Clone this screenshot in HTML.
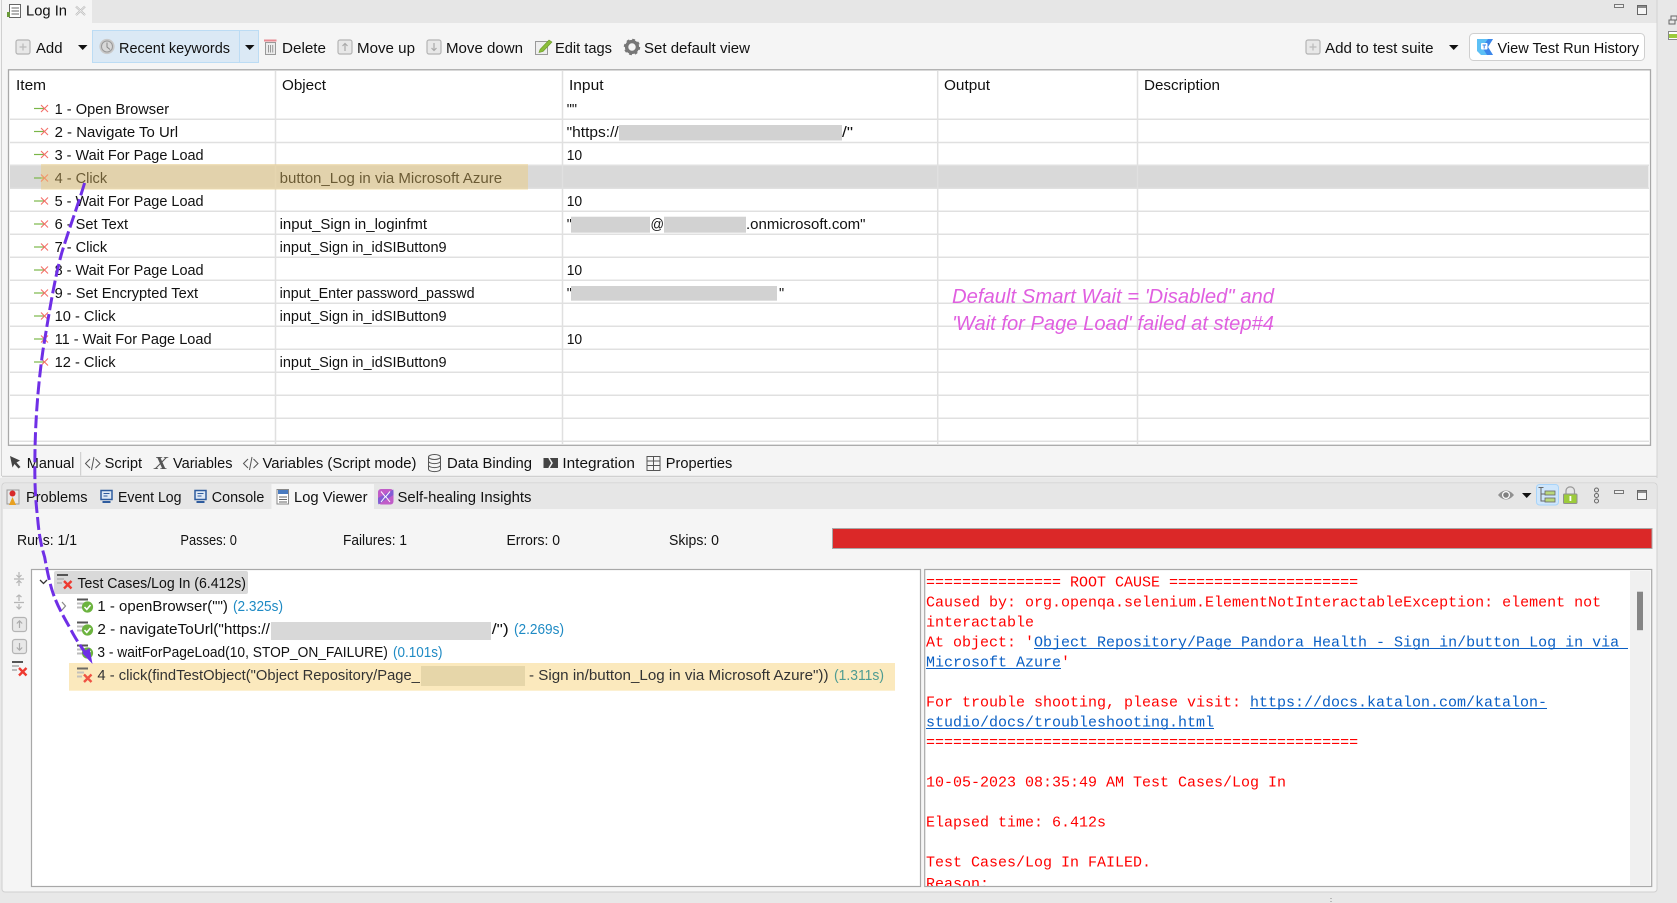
<!DOCTYPE html>
<html><head><meta charset="utf-8"><title>Log In</title>
<style>
html,body{margin:0;padding:0;background:#e8e8e8;overflow:hidden}
svg{display:block}
text{font-family:"Liberation Sans",sans-serif;font-size:14.5px;fill:#111}
.m{font-family:"Liberation Mono",monospace;font-size:15px;fill:#f00}
.l{font-family:"Liberation Mono",monospace;font-size:15px;fill:#0a5fc4}
.t{fill:#1e8ac4}
.p{font-style:italic;font-size:20px;fill:#e05fe0}
.g{stroke:#e0e0e0;stroke-width:1.5;fill:none}
.ib{fill:#e8e8e8;stroke:#b4b4b4;stroke-width:1.2}
.ia{stroke:#aaa;stroke-width:1.2;fill:none}
</style></head><body>
<svg xmlns="http://www.w3.org/2000/svg" width="1677" height="903" viewBox="0 0 1677 903">
<defs>
<clipPath id="cons"><rect x="925" y="570" width="705" height="316"/></clipPath>
<g id="rx"><path d="M34 0H44" stroke="#7ab648" stroke-width="1.2"/><path d="M41 -3.5L48 3.5M48 -3.5L41 3.5" stroke="#f4706a" stroke-width="1.1"/></g>
<g id="bars"><path d="M0 0H11" stroke="#555" stroke-width="2"/><path d="M0 4H7M0 8H5" stroke="#bbb" stroke-width="2"/></g>
<g id="ok"><use href="#bars"/><circle cx="10.500" cy="7.500" r="5.600" fill="#6cb33f"/><path d="M7.500 7.500l2.300 2.400L13.500 5.500" stroke="#fff" stroke-width="1.600" fill="none"/></g>
<g id="bad"><use href="#bars"/><path d="M7 6L14.500 13.500M14.500 6L7 13.500" stroke="#ee3a30" stroke-width="2.400"/></g>
<g id="mon"><rect x="0.500" y="0.500" width="11" height="9" fill="#dfe9f5" stroke="#2f5c9e" stroke-width="1.500"/><path d="M3 3.500H9M3 6H7" stroke="#2f5c9e"/><path d="M2 12H10" stroke="#2f5c9e" stroke-width="2"/></g>
</defs>

<rect width="1677" height="903" fill="#e8e8e8"/>
<rect x="0" y="0" width="1657" height="23" fill="#e6e6e6"/>
<rect x="0" y="23" width="1657" height="455" fill="#f5f5f5"/>
<rect x="0" y="0" width="92" height="23" fill="#f5f5f5"/>
<path d="M1.500 0V476" stroke="#d0d0d0" stroke-width="1"/>
<path d="M1657 0V478" stroke="#d2d2d2" stroke-width="1"/>
<path d="M2 476.500H1657" stroke="#d0d0d0" stroke-width="1.500"/>

<rect x="9.500" y="4.500" width="11" height="13" fill="#fff" stroke="#666"/><path d="M11.500 8H19M11.500 11H19M11.500 14H19" stroke="#666"/><rect x="7" y="12" width="3" height="5" fill="#6a9a3a"/>
<text x="26" y="15.500" textLength="41" lengthAdjust="spacingAndGlyphs">Log In</text>
<path d="M76 6.500L85 15M85 6.500L76 15" stroke="#b5b5b5" stroke-width="2" fill="none"/><path d="M76 6.500L85 15M85 6.500L76 15" stroke="#f2f2f2" stroke-width=".8" fill="none"/>
<rect x="1614.500" y="4.500" width="9" height="3" fill="#eee" stroke="#777"/>
<rect x="1637.500" y="5.500" width="9" height="9" fill="#f5f5f5" stroke="#666"/><path d="M1637.500 7H1646.500" stroke="#666" stroke-width="1.500"/>
<rect x="1671" y="16" width="6" height="4" fill="none" stroke="#666"/><rect x="1669" y="20" width="6" height="4" fill="none" stroke="#666"/>
<rect x="1668.500" y="31.500" width="9" height="8" fill="#fff" stroke="#888"/><rect x="1669" y="34" width="8" height="4" fill="#9ccb3b"/>

<rect class="ib" x="16" y="40" width="14" height="14" rx="2"/><path d="M23 43.500V50.500M19.500 47H26.500" stroke="#bbb" stroke-width="1.200"/>
<text x="36" y="53" textLength="26.500" lengthAdjust="spacingAndGlyphs">Add</text>
<path d="M78 45H87.500L82.700 50Z" fill="#111"/>
<rect x="92.500" y="30.500" width="147" height="32" fill="#dbe9f5" stroke="#bcdcf4"/>
<rect x="239.500" y="30.500" width="19" height="32" fill="#dbe9f5" stroke="#bcdcf4"/>
<circle cx="107" cy="46.500" r="7.600" fill="#c9c9c9"/><circle cx="107" cy="46.500" r="5.500" fill="#d8d8d8" stroke="#999"/><path d="M107 42.500V47L110 49.500" stroke="#888" fill="none"/>
<text x="119" y="53" textLength="111" lengthAdjust="spacingAndGlyphs">Recent keywords</text>
<path d="M245 45H254.500L249.700 50Z" fill="#111"/>
<path d="M265.500 42.500H275.500V54.500H265.500Z M268.500 45V52.500M270.500 45V52.500M272.700 45V52.500" fill="#ececec" stroke="#999"/><rect x="264" y="39.500" width="12.500" height="2" fill="#e88a92"/>
<text x="282" y="53" textLength="44" lengthAdjust="spacingAndGlyphs">Delete</text>
<rect class="ib" x="338" y="40" width="14" height="14" rx="2"/><path d="M345 51V43.500M342.500 46L345 43.500L347.500 46" class="ia"/>
<text x="357" y="53" textLength="58" lengthAdjust="spacingAndGlyphs">Move up</text>
<rect class="ib" x="427" y="40" width="14" height="14" rx="2"/><path d="M434 43V50.500M431.500 48L434 50.500L436.500 48" class="ia"/>
<text x="446" y="53" textLength="77" lengthAdjust="spacingAndGlyphs">Move down</text>
<rect x="535.500" y="41.500" width="12" height="13" fill="#eee" stroke="#999"/><path d="M540 49.500L549 40L552 42L543 51.500L539 52.500Z" fill="#8bbd3a" stroke="#6a9a2a" stroke-width=".6"/>
<text x="555" y="53" textLength="57" lengthAdjust="spacingAndGlyphs">Edit tags</text>
<circle cx="632" cy="47" r="5.400" fill="none" stroke="#777" stroke-width="3.400"/><circle cx="632" cy="47" r="7.200" fill="none" stroke="#777" stroke-width="2" stroke-dasharray="2.800 2.850"/>
<text x="644" y="53" textLength="106" lengthAdjust="spacingAndGlyphs">Set default view</text>
<rect class="ib" x="1306" y="40" width="14" height="14" rx="2"/><path d="M1313 43.500V50.500M1309.500 47H1316.500" stroke="#bbb" stroke-width="1.200"/>
<text x="1325" y="53" textLength="108.500" lengthAdjust="spacingAndGlyphs">Add to test suite</text>
<path d="M1449 45H1458.500L1453.700 50Z" fill="#111"/>
<rect x="1469.500" y="33.500" width="175" height="27" rx="4" fill="#fff" stroke="#cfcfcf"/>
<path d="M1477 39H1493L1488 47L1493 55H1481L1477 51Z" fill="#5dc0f5"/><path d="M1488 39H1493L1488 47L1493 55H1487L1482 47Z" fill="#3d86ea"/><rect x="1481" y="43" width="6.500" height="6.500" rx="1" fill="#fff"/><path d="M1482.500 45H1486M1484.200 45V48.500" stroke="#3d86ea"/>
<text x="1497.500" y="53" textLength="141.500" lengthAdjust="spacingAndGlyphs">View Test Run History</text>

<rect x="8.500" y="69.800" width="1642" height="375.500" fill="#fff" stroke="#a8a8a8" stroke-width="1.300"/>
<rect x="10" y="165" width="1638.500" height="23.500" fill="#d9d9d9"/>
<g class="g">
<path d="M10 119.300H1649M10 142.500H1649M10 165.300H1649M10 188.300H1649M10 211.300H1649M10 234.300H1649M10 257.300H1649M10 280.300H1649M10 303.300H1649M10 326.300H1649M10 349.300H1649M10 372.300H1649M10 395.300H1649M10 418.300H1649M10 441.300H1649"/>
<path d="M275.500 71V444M562.500 71V444M937.700 71V444M1137.500 71V444"/>
</g>

<text x="16" y="90" textLength="30" lengthAdjust="spacingAndGlyphs">Item</text>
<text x="282" y="90" textLength="44" lengthAdjust="spacingAndGlyphs">Object</text>
<text x="569" y="90" textLength="34.500" lengthAdjust="spacingAndGlyphs">Input</text>
<text x="944" y="90" textLength="46" lengthAdjust="spacingAndGlyphs">Output</text>
<text x="1144" y="90" textLength="76" lengthAdjust="spacingAndGlyphs">Description</text>

<use href="#rx" y="108.500"/><use href="#rx" y="131.500"/><use href="#rx" y="154.500"/><use href="#rx" y="178"/><use href="#rx" y="201"/><use href="#rx" y="224"/><use href="#rx" y="247"/><use href="#rx" y="270"/><use href="#rx" y="293"/><use href="#rx" y="316"/><use href="#rx" y="339"/><use href="#rx" y="362"/>

<text x="54.600" y="114" textLength="114.500" lengthAdjust="spacingAndGlyphs">1 - Open Browser</text>
<text x="54.600" y="137" textLength="123.500" lengthAdjust="spacingAndGlyphs">2 - Navigate To Url</text>
<text x="54.600" y="160" textLength="149" lengthAdjust="spacingAndGlyphs">3 - Wait For Page Load</text>
<text x="54.600" y="183" textLength="52.500" lengthAdjust="spacingAndGlyphs">4 - Click</text>
<text x="54.600" y="206" textLength="149" lengthAdjust="spacingAndGlyphs">5 - Wait For Page Load</text>
<text x="54.600" y="229" textLength="73.500" lengthAdjust="spacingAndGlyphs">6 - Set Text</text>
<text x="54.600" y="252" textLength="52.500" lengthAdjust="spacingAndGlyphs">7 - Click</text>
<text x="54.600" y="275" textLength="149" lengthAdjust="spacingAndGlyphs">8 - Wait For Page Load</text>
<text x="54.600" y="298" textLength="143.500" lengthAdjust="spacingAndGlyphs">9 - Set Encrypted Text</text>
<text x="54.600" y="321" textLength="61" lengthAdjust="spacingAndGlyphs">10 - Click</text>
<text x="54.600" y="344" textLength="157" lengthAdjust="spacingAndGlyphs">11 - Wait For Page Load</text>
<text x="54.600" y="367" textLength="61" lengthAdjust="spacingAndGlyphs">12 - Click</text>

<text x="279.600" y="183" textLength="222.500" lengthAdjust="spacingAndGlyphs">button_Log in via Microsoft Azure</text>
<text x="279.600" y="229" textLength="147.500" lengthAdjust="spacingAndGlyphs">input_Sign in_loginfmt</text>
<text x="279.600" y="252" textLength="167" lengthAdjust="spacingAndGlyphs">input_Sign in_idSIButton9</text>
<text x="279.600" y="298" textLength="195" lengthAdjust="spacingAndGlyphs">input_Enter password_passwd</text>
<text x="279.600" y="321" textLength="167" lengthAdjust="spacingAndGlyphs">input_Sign in_idSIButton9</text>
<text x="279.600" y="367" textLength="167" lengthAdjust="spacingAndGlyphs">input_Sign in_idSIButton9</text>

<text x="566.700" y="114">""</text>
<text x="566.700" y="137" textLength="52" lengthAdjust="spacingAndGlyphs">"https://</text>
<rect x="619" y="125" width="223" height="15.500" fill="#d2d2d2"/>
<text x="842" y="137" textLength="11" lengthAdjust="spacingAndGlyphs">/"</text>
<text x="566.700" y="160" textLength="15.500" lengthAdjust="spacingAndGlyphs">10</text>
<text x="566.700" y="206" textLength="15.500" lengthAdjust="spacingAndGlyphs">10</text>
<text x="566.700" y="229">"</text>
<rect x="571" y="216.700" width="79" height="16" fill="#d2d2d2"/>
<text x="650.500" y="229" textLength="13.500" lengthAdjust="spacingAndGlyphs">@</text>
<rect x="664" y="216.700" width="82" height="16" fill="#d2d2d2"/>
<text x="746" y="229" textLength="119.500" lengthAdjust="spacingAndGlyphs">.onmicrosoft.com"</text>
<text x="566.700" y="275" textLength="15.500" lengthAdjust="spacingAndGlyphs">10</text>
<text x="566.700" y="298">"</text>
<rect x="571" y="286" width="206" height="14.700" fill="#d2d2d2"/>
<text x="779" y="298">"</text>
<text x="566.700" y="344" textLength="15.500" lengthAdjust="spacingAndGlyphs">10</text>

<rect x="41" y="164" width="487" height="25.700" fill="#f0c868" opacity=".4"/>

<text class="p" x="952" y="303" textLength="322" lengthAdjust="spacingAndGlyphs">Default Smart Wait = 'Disabled" and</text>
<text class="p" x="952" y="330" textLength="322" lengthAdjust="spacingAndGlyphs">'Wait for Page Load' failed at step#4</text>

<path d="M10 456L20 460.500L16.500 462.500L20.500 467L18.500 468.500L14.500 464L12.500 467.500Z" fill="#444"/>
<text x="26.800" y="468" textLength="47.500" lengthAdjust="spacingAndGlyphs">Manual</text>
<path d="M80.700 452V475.500" stroke="#c8c8c8"/>
<path d="M90 459L85.500 463.500L90 468M95.500 459L100 463.500L95.500 468M94 457L91.500 470" stroke="#555" fill="none"/>
<text x="104.600" y="468" textLength="37.500" lengthAdjust="spacingAndGlyphs">Script</text>
<text x="154" y="469" textLength="14" lengthAdjust="spacingAndGlyphs" style="font-family:'Liberation Serif',serif;font-weight:bold;font-style:italic;font-size:18px;fill:#555">X</text>
<text x="173" y="468" textLength="59.500" lengthAdjust="spacingAndGlyphs">Variables</text>
<path d="M248 459L243.500 463.500L248 468M253.500 459L258 463.500L253.500 468M252 457L249.500 470" stroke="#555" fill="none"/>
<text x="262.500" y="468" textLength="154" lengthAdjust="spacingAndGlyphs">Variables (Script mode)</text>
<ellipse cx="434.500" cy="457" rx="6" ry="2.500" fill="#f5f5f5" stroke="#555"/><path d="M428.500 457V469C428.500 472.500 440.500 472.500 440.500 469V457M428.500 461C428.500 464.500 440.500 464.500 440.500 461M428.500 465C428.500 468.500 440.500 468.500 440.500 465" fill="none" stroke="#555"/>
<text x="447" y="468" textLength="85" lengthAdjust="spacingAndGlyphs">Data Binding</text>
<rect x="543.500" y="458" width="14.500" height="10" fill="#444"/><path d="M549 458L552 463L549 468" stroke="#f5f5f5" stroke-width="1.500" fill="none"/>
<text x="562.400" y="468" textLength="72.500" lengthAdjust="spacingAndGlyphs">Integration</text>
<path d="M647 456.500H660V470.500H647ZM647 461H660M647 465.500H660M653.500 456.500V470.500" stroke="#555" fill="none"/>
<text x="665.800" y="468" textLength="66.500" lengthAdjust="spacingAndGlyphs">Properties</text>

<rect x="2" y="483" width="1655" height="409" rx="3" fill="#f5f5f5" stroke="#d0d0d0"/>
<rect x="3" y="484" width="1653" height="25" fill="#e6e6e6"/>
<rect x="271.500" y="483.500" width="102.500" height="26" fill="#f5f5f5"/>

<rect x="7" y="490" width="12" height="14" fill="#e8e8e8" stroke="#999"/><circle cx="12.500" cy="493.500" r="3" fill="#d82a2a"/><path d="M9 505L12.500 497L16 505Z" fill="#e8a020"/>
<text x="26" y="501.800" textLength="61.500" lengthAdjust="spacingAndGlyphs">Problems</text>
<use href="#mon" x="100.500" y="490"/>
<text x="118" y="501.800" textLength="63.500" lengthAdjust="spacingAndGlyphs">Event Log</text>
<use href="#mon" x="194.500" y="490"/>
<text x="211.800" y="501.800" textLength="52.500" lengthAdjust="spacingAndGlyphs">Console</text>
<rect x="277" y="489.500" width="11.500" height="14.500" fill="#fff" stroke="#888"/><rect x="278" y="490" width="10" height="4" fill="#4a7bc0"/><path d="M279 497H287M279 499.500H287M279 502H287" stroke="#666"/>
<text x="294" y="501.800" textLength="73.500" lengthAdjust="spacingAndGlyphs">Log Viewer</text>
<rect x="378" y="489" width="15.500" height="15.500" rx="3" fill="#c05cc8"/><path d="M378 504.500V498L393.500 489.500V495Z" fill="#6a5cd8" opacity=".7"/><path d="M381 491.500L385.500 497L390 491.500M385 497L381 502M386 497L390 502" stroke="#fff" fill="none"/>
<text x="397.500" y="501.800" textLength="134" lengthAdjust="spacingAndGlyphs">Self-healing Insights</text>

<path d="M1498 495C1503 489 1509 489 1514 495C1509 501 1503 501 1498 495Z" fill="#909090"/><circle cx="1506" cy="495" r="4" fill="#fff"/><circle cx="1506" cy="495" r="2.800" fill="#808080"/>
<path d="M1522 493H1531.500L1526.700 498Z" fill="#111"/>
<rect x="1536.500" y="484.500" width="22" height="20.500" rx="3" fill="#cfe6fb" stroke="#a8d4fa"/>
<path d="M1541 488V501H1545M1541 494H1545M1538.500 487.500H1543.500" stroke="#666" fill="none"/><rect x="1545" y="491" width="10" height="4" fill="#b9d77a" stroke="#666" stroke-width=".8"/><rect x="1545" y="498" width="10" height="4" fill="#b9d77a" stroke="#666" stroke-width=".8"/>
<path d="M1566 494V491C1566 485.500 1574.500 485.500 1574.500 491V494" stroke="#9a9a9a" stroke-width="1.200" fill="none"/><rect x="1563.500" y="494" width="13.500" height="9.500" rx="1" fill="#9ccb3b" stroke="#909090"/><rect x="1569.500" y="496" width="1.800" height="5" fill="#fff"/>
<circle cx="1596.500" cy="490" r="2" fill="none" stroke="#666"/><circle cx="1596.500" cy="495.500" r="2" fill="none" stroke="#666"/><circle cx="1596.500" cy="501" r="2" fill="none" stroke="#666"/>
<rect x="1614.500" y="490.500" width="9" height="3" fill="#eee" stroke="#777"/>
<rect x="1637.500" y="490.500" width="9" height="9" fill="#f5f5f5" stroke="#666"/><path d="M1637.500 492H1646.500" stroke="#666" stroke-width="1.500"/>

<text x="17" y="545" textLength="60" lengthAdjust="spacingAndGlyphs">Runs: 1/1</text>
<text x="180.400" y="545" textLength="56.500" lengthAdjust="spacingAndGlyphs">Passes: 0</text>
<text x="343" y="545" textLength="64" lengthAdjust="spacingAndGlyphs">Failures: 1</text>
<text x="506.500" y="545" textLength="53.500" lengthAdjust="spacingAndGlyphs">Errors: 0</text>
<text x="669" y="545" textLength="50" lengthAdjust="spacingAndGlyphs">Skips: 0</text>
<rect x="832.500" y="528.500" width="819.500" height="20" fill="#db2828" stroke="#a8a8a8"/>

<path d="M19 572V577M16.500 575L19 577.500L21.500 575M19 586V581M16.500 583L19 580.500L21.500 583M14 579H24" stroke="#b5b5b5" fill="none" stroke-width="1.200"/>
<path d="M19 595V601M16.500 597L19 595L21.500 597M19 609V604M16.500 606.500L19 609L21.500 606.500M14 602.500H24" stroke="#b5b5b5" fill="none" stroke-width="1.200"/>
<rect class="ib" x="12.500" y="617.500" width="14" height="14" rx="2.500"/><path d="M19.500 628V621M16.800 623.500L19.500 620.800L22.200 623.500" class="ia"/>
<rect class="ib" x="12.500" y="639.500" width="14" height="14" rx="2.500"/><path d="M19.500 643V650M16.800 647.500L19.500 650.200L22.200 647.500" class="ia"/>
<use href="#bad" x="12" y="662"/>

<rect x="31.500" y="569.500" width="889" height="317" fill="#fff" stroke="#a8a8a8" stroke-width="1.200"/>
<rect x="54" y="571" width="194" height="23" rx="2" fill="#d9d9d9"/>
<path d="M40 580L43.500 583.500L47 580" stroke="#333" stroke-width="1.300" fill="none"/>
<use href="#bad" x="57" y="575"/>
<text x="77.500" y="588" textLength="168.500" lengthAdjust="spacingAndGlyphs">Test Cases/Log In (6.412s)</text>
<path d="M62 602L65.500 606L62 610" stroke="#888" stroke-width="1.200" fill="none"/>
<use href="#ok" x="77" y="599.500"/>
<text x="97.400" y="611" textLength="130.500" lengthAdjust="spacingAndGlyphs">1 - openBrowser("")</text>
<text class="t" x="233" y="611" textLength="50" lengthAdjust="spacingAndGlyphs">(2.325s)</text>
<use href="#ok" x="77" y="622.500"/>
<text x="97.400" y="634" textLength="172.500" lengthAdjust="spacingAndGlyphs">2 - navigateToUrl("https://</text>
<rect x="271" y="622" width="220" height="18" fill="#d8d8d8"/>
<text x="491.800" y="634" textLength="17" lengthAdjust="spacingAndGlyphs">/")</text>
<text class="t" x="514" y="634" textLength="50" lengthAdjust="spacingAndGlyphs">(2.269s)</text>
<use href="#ok" x="77" y="645.500"/>
<text x="97.400" y="657" textLength="290.500" lengthAdjust="spacingAndGlyphs">3 - waitForPageLoad(10, STOP_ON_FAILURE)</text>
<text class="t" x="393" y="657" textLength="49.500" lengthAdjust="spacingAndGlyphs">(0.101s)</text>
<rect x="69" y="663" width="826" height="27.700" fill="#fbe9bd"/>
<rect x="421" y="666" width="104" height="20" fill="#e6d6a9"/>
<g opacity=".85"><use href="#bad" x="77" y="668.500"/></g>
<text x="97.400" y="680" textLength="322.500" lengthAdjust="spacingAndGlyphs" style="fill:#333">4 - click(findTestObject("Object Repository/Page_</text>
<text x="529" y="680" textLength="299.500" lengthAdjust="spacingAndGlyphs" style="fill:#333">- Sign in/button_Log in via Microsoft Azure"))</text>
<text x="834" y="680" textLength="50" lengthAdjust="spacingAndGlyphs" style="fill:#4f9c92">(1.311s)</text>

<rect x="924.700" y="569.500" width="727" height="317" fill="#fff" stroke="#a8a8a8" stroke-width="1.200"/>
<rect x="1630" y="571" width="20.500" height="315" fill="#f0f0f0"/>
<rect x="1637" y="591.700" width="6" height="38.500" fill="#858585"/>
<g clip-path="url(#cons)">
<text class="m" x="926" y="586.500" xml:space="preserve">=============== ROOT CAUSE =====================</text>
<text class="m" x="926" y="606.500" xml:space="preserve">Caused by: org.openqa.selenium.ElementNotInteractableException: element not</text>
<text class="m" x="926" y="626.500">interactable</text>
<text class="m" x="926" y="646.500" xml:space="preserve">At object: '</text>
<text class="l" x="1034" y="646.500" xml:space="preserve">Object Repository/Page Pandora Health - Sign in/button Log in via </text>
<text class="l" x="926" y="666.500">Microsoft Azure</text>
<text class="m" x="1061" y="666.500">'</text>
<text class="m" x="926" y="706.500" xml:space="preserve">For trouble shooting, please visit: </text>
<text class="l" x="1250" y="706.500">https://docs.katalon.com/katalon-</text>
<text class="l" x="926" y="726.500">studio/docs/troubleshooting.html</text>
<text class="m" x="926" y="746.500">================================================</text>
<text class="m" x="926" y="786.500">10-05-2023 08:35:49 AM Test Cases/Log In</text>
<text class="m" x="926" y="826.500">Elapsed time: 6.412s</text>
<text class="m" x="926" y="866.500">Test Cases/Log In FAILED.</text>
<text class="m" x="926" y="888">Reason:</text>
<path d="M1034 648.500H1628M926 668.500H1061M1250 708.500H1547M926 728.500H1214" stroke="#0a5fc4" stroke-width="1"/>
</g>
<path d="M1331 898V899M1331 901V902" stroke="#888"/>

<path d="M84.600 183C78 205 70 226 62 252C54 280 48 320 43 350C38 385 35.500 420 35 450C34.500 480 35 495 37.500 517C39 535 41 545 44.600 557C47 570 49 580 52 590C56 603 62 614 70 628C76 640 82 648 87 655" fill="none" stroke="#6f2fe6" stroke-width="3" stroke-dasharray="13 4"/>
<path d="M82 653L89.500 648L92.500 664Z" fill="#6f2fe6"/>
</svg>
</body></html>
